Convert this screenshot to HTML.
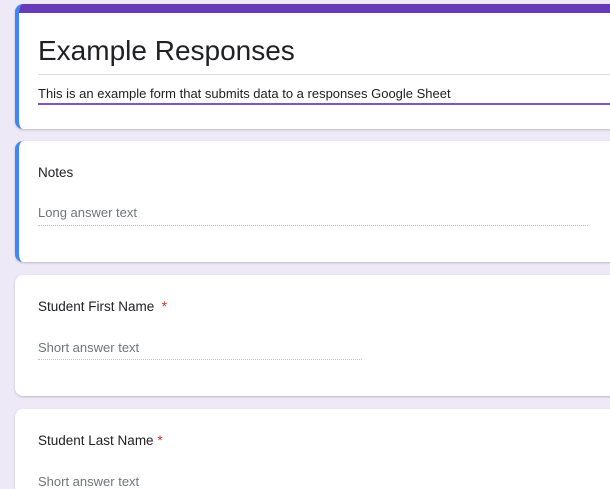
<!DOCTYPE html>
<html style="width:610px;height:489px;overflow:hidden"><head><style>
body{margin:0;width:610px;height:489px;overflow:hidden;background:#ede9f6;font-family:"Liberation Sans",Arial,sans-serif;position:relative}
.card{position:absolute;left:15px;width:610px;background:#fff;border-radius:8px;box-shadow:0 1px 2px rgba(0,0,0,.2)}
.t{position:absolute;left:23px;color:#202124}
</style></head><body>
<div class="card" style="top:4px;height:125px;overflow:hidden;border-left:4px solid #4285f4;left:15px;width:606px">
 <div style="position:absolute;left:-4px;top:0;width:620px;height:9px;background:#673ab7"></div>
 <div class="t" style="left:19px;top:31px;font-size:28px">Example Responses</div>
 <div style="position:absolute;left:19px;right:0;top:70px;border-top:1px solid #dadce0"></div>
 <div class="t" style="left:19px;top:82px;font-size:13px">This is an example form that submits data to a responses Google Sheet</div>
 <div style="position:absolute;left:19px;right:0;top:99px;border-top:2px solid #7e57c2"></div>
</div>
<div class="card" style="top:141px;height:121px;border-left:4px solid #4285f4;width:606px">
 <div class="t" style="left:19px;top:24px;font-size:13.5px">Notes</div>
 <div class="t" style="left:19px;top:64px;font-size:13px;color:#70757a">Long answer text</div>
 <div style="position:absolute;left:19px;width:550px;top:84px;border-top:1px dotted #bdc1c6"></div>
</div>
<div class="card" style="top:275px;height:121px">
 <div class="t" style="top:24px;font-size:13.5px">Student First Name <span style="color:#d93025">&nbsp;*</span></div>
 <div class="t" style="top:65px;font-size:13px;color:#70757a">Short answer text</div>
 <div style="position:absolute;left:23px;width:324px;top:84px;border-top:1px dotted #bdc1c6"></div>
</div>
<div class="card" style="top:409px;height:80px;border-radius:8px 8px 0 0">
 <div class="t" style="top:24px;font-size:13.5px">Student Last Name <span style="color:#d93025">*</span></div>
 <div class="t" style="top:65px;font-size:13px;color:#70757a">Short answer text</div>
</div>
</body></html>
